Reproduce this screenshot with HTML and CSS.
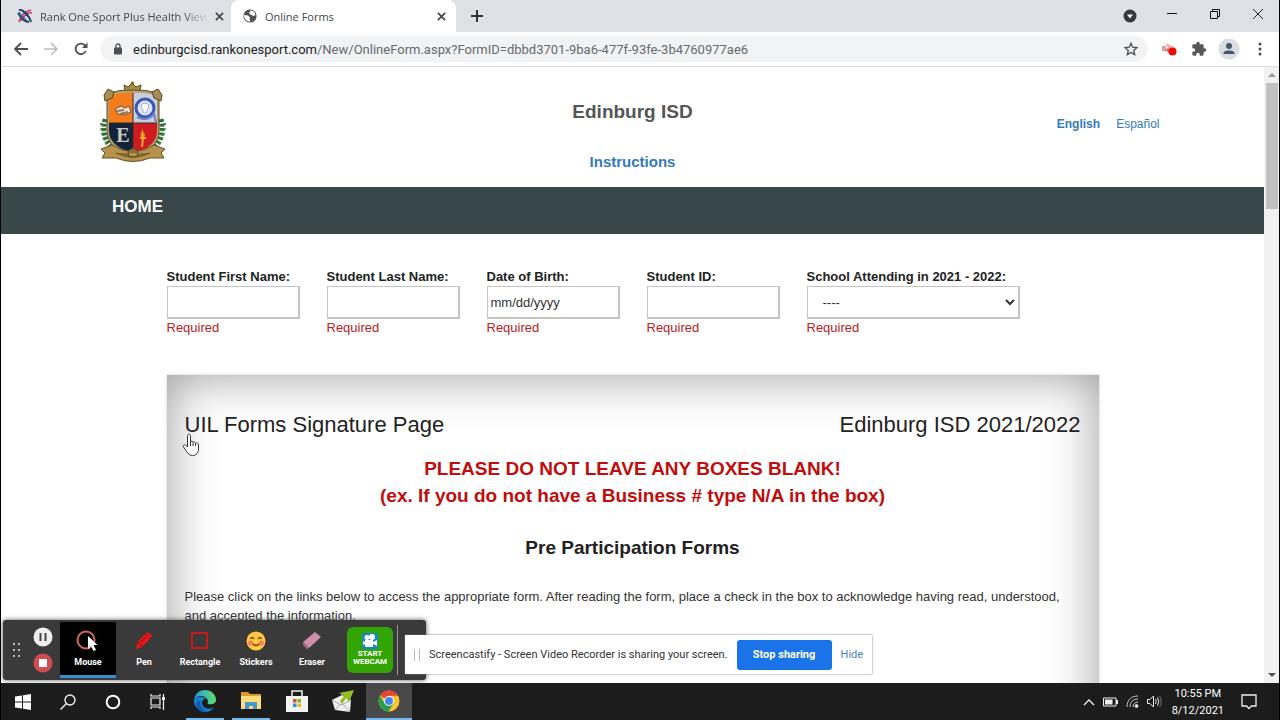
FILE: index.html
```html
<!DOCTYPE html>
<html lang="en">
<head>
    <meta charset="UTF-8">
    <meta name="viewport" content="width=device-width, initial-scale=1.0">
    <title>Online Forms</title>
    <link rel="stylesheet" href="styles.css">
</head>
<body>
    <!-- Tabs -->
    <div class="tab-strip">
        <div class="tab">
            <svg width="16" height="16" viewBox="0 0 16 16" fill="none" stroke-width="2">
                <path d="M14 2C8 3 3 9 2 14M15 5C12 4 8 6 4 13" stroke="#d23c5a" stroke-width="1.500"/>
                <path d="M2 2C7 1 13 9 14 14M1 5C4 10 8 14 12 14" stroke="#24466f"/>
                <path d="M4 2L13 11M2 4L10 13" stroke="#24466f" stroke-width="1"/>
            </svg>
            <span class="tab-title fade">Rank One Sport Plus Health View</span>
            <button class="icon-btn" aria-label="Close tab"><svg width="9" height="9" viewBox="0 0 10 10" stroke="#444" stroke-width="1.800"><path d="M1 1L9 9M9 1L1 9"/></svg></button>
        </div>
        <div class="tab active">
            <svg width="14" height="14" viewBox="0 0 14 14">
                <circle cx="7" cy="7" r="6.600" fill="#505357"/>
                <path d="M1 6L5 6.500L7 8.500L6.500 10L7.500 12.500C4 13 1 10 1 6ZM7.500 1.500L11 2.500L12.500 6L10.500 7L8.500 6L7 5L6 4Z" fill="#fff"/>
            </svg>
            <span class="tab-title">Online Forms</span>
            <button class="icon-btn" aria-label="Close tab"><svg width="9" height="9" viewBox="0 0 10 10" stroke="#444" stroke-width="1.800"><path d="M1 1L9 9M9 1L1 9"/></svg></button>
        </div>
        <button class="icon-btn new-tab" aria-label="New tab"><svg width="12" height="12" viewBox="0 0 12 12" stroke="#333" stroke-width="2"><path d="M6 0V12M0 6H12"/></svg></button>
        <div class="window-controls">
            <button class="icon-btn" aria-label="Search tabs"><svg width="14" height="14" viewBox="0 0 14 14"><circle cx="7" cy="7" r="6.500" fill="#35383c"/><path d="M4 5.500H10L7 9.500Z" fill="#fff"/></svg></button>
            <button class="icon-btn" aria-label="Minimize"><svg width="10" height="10" viewBox="0 0 10 10" stroke="#111"><path d="M0 4.500H10"/></svg></button>
            <button class="icon-btn" aria-label="Restore"><svg width="10" height="10" viewBox="0 0 10 10" stroke="#111" fill="none"><path d="M.5 2.500H7.500V9.500H.5ZM2.500 2.500V.5H9.500V7.500H7.500"/></svg></button>
            <button class="icon-btn" aria-label="Close"><svg width="10" height="10" viewBox="0 0 10 10" stroke="#222"><path d="M0 0L10 10M10 0L0 10"/></svg></button>
        </div>
    </div>

    <!-- Address bar -->
    <div class="toolbar">
        <button class="icon-btn" aria-label="Back"><svg width="14" height="14" viewBox="0 0 14 14" fill="none" stroke="#4a4d51" stroke-width="1.800"><path d="M14 7H1.500M7 1L1 7L7 13"/></svg></button>
        <button class="icon-btn" aria-label="Forward"><svg width="14" height="14" viewBox="0 0 14 14" fill="none" stroke="#b9bbbd" stroke-width="1.500"><path d="M0 7H12.500M7 1L13 7L7 13"/></svg></button>
        <button class="icon-btn" aria-label="Reload"><svg width="14" height="14" viewBox="0 0 14 14" fill="none" stroke="#4a4d51" stroke-width="1.800"><path d="M11.800 9A5.300 5.300 0 1 1 11.300 3.800"/><path d="M13.500 .5V6H8Z" fill="#4a4d51" stroke="none"/></svg></button>
        <div class="address">
            <svg width="10" height="12" viewBox="0 0 10 12"><rect x="1" y="4.500" width="8" height="7" rx="1" fill="#4d5054"/><path d="M3 5V3A2 2 0 0 1 7 3V5" fill="none" stroke="#4d5054" stroke-width="1.300"/></svg>
            <span class="url">edinburgcisd.rankonesport.com<span class="path">/New/OnlineForm.aspx?FormID=dbbd3701-9ba6-477f-93fe-3b4760977ae6</span></span>
            <button class="icon-btn" aria-label="Bookmark"><svg width="14" height="14" viewBox="0 0 14 14" fill="none" stroke="#4a4d51" stroke-width="1.300"><path d="M7 1.200L8.700 5.200L13 5.600L9.700 8.400L10.700 12.600L7 10.400L3.300 12.600L4.300 8.400L1 5.600L5.300 5.200Z"/></svg></button>
        </div>
        <div class="extensions">
            <button class="icon-btn" aria-label="Screencastify"><svg width="16" height="16" viewBox="0 0 16 16"><path d="M1 5H5V10H1Z" fill="#e79a9a"/><path d="M5 2L13 6L11 8L6 6Z" fill="#f0b0b0"/><path d="M4 9L8 12L8 6Z" fill="#d77"/><circle cx="11.500" cy="10.500" r="4" fill="#f00808"/></svg></button>
            <button class="icon-btn" aria-label="Extensions"><svg width="16" height="16" viewBox="0 0 24 24" fill="#55585c"><path d="M20.500 11H19V7c0-1.100-.9-2-2-2h-4V3.500a2.500 2.500 0 0 0-5 0V5H4c-1.100 0-2 .9-2 2v3.800h1.500a2.700 2.700 0 0 1 0 5.400H2V20c0 1.100.9 2 2 2h3.800v-1.500a2.700 2.700 0 0 1 5.400 0V22H17c1.100 0 2-.9 2-2v-4h1.500a2.500 2.500 0 0 0 0-5z"/></svg></button>
            <button class="icon-btn" aria-label="Profile"><svg width="22" height="22" viewBox="0 0 22 22"><circle cx="11" cy="11" r="10.500" fill="#dadde2"/><circle cx="11" cy="8" r="3" fill="#45586b"/><path d="M5.500 16V15C5.500 11.500 16.500 11.500 16.500 15V16Z" fill="#45586b"/></svg></button>
            <button class="icon-btn" aria-label="Menu"><svg width="4" height="14" viewBox="0 0 4 14" fill="#4a4d51"><circle cx="2" cy="2" r="1.500"/><circle cx="2" cy="7" r="1.500"/><circle cx="2" cy="12" r="1.500"/></svg></button>
        </div>
    </div>

    <!-- Page -->
    <div class="viewport">
        <main class="page">
            <header class="page-header">
                <svg class="crest" width="66" height="84" viewBox="0 0 66 84">
                    <g fill="none" stroke="#2f7037" stroke-width="5" stroke-dasharray="3 1.500">
                        <path d="M5 38C2 52 5 64 18 71"/>
                        <path d="M61 38C64 52 61 64 48 71"/>
                    </g>
                    <g fill="none" stroke="#4d8a4c" stroke-width="2" stroke-dasharray="2 3">
                        <path d="M1 42C1 54 4 62 12 69"/>
                        <path d="M65 42C65 54 62 62 54 69"/>
                    </g>
                    <path d="M25 10L24 4L28 6L32 2L36 6L41 4L40 10Z" fill="#a88d3f" stroke="#59491d"/>
                    <circle cx="32.500" cy="2" r="1.500" fill="#6e5a25"/>
                    <path d="M7 13Q20 8 33 9Q46 8 59 13V50C59 62 50 70 33 76C16 70 7 62 7 50Z" fill="#b7a069" stroke="#5b4c2a"/>
                    <path d="M9 15Q21 11 33 12V42H9Z" fill="#f47c1c"/>
                    <path d="M33 12Q46 11 57 15V42H33Z" fill="#c9cde0"/>
                    <path d="M9 42H33V73C18 67 9 61 9 50Z" fill="#13233c"/>
                    <path d="M33 42H57V50C57 61 49 67 33 73Z" fill="#cf1c22"/>
                    <path d="M33 12V73M9 42H57" stroke="#3b2b20"/>
                    <path d="M15 28L21 25L25 27L29 25L31 31L25 34L18 33Z" fill="#f5e3cd" stroke="#7a4b2d"/>
                    <path d="M17 30L24 29M20 33L28 31" stroke="#8e7765" stroke-width="2"/>
                    <circle cx="45" cy="27" r="9" fill="#dfe5fb" stroke="#3858b4" stroke-width="3"/>
                    <path d="M41 26A4 4 0 0 1 49 26L47 29V32H43V29Z" fill="#fff" stroke="#9dabd8"/>
                    <path d="M37 36Q47 41 54 33L56 41" fill="none" stroke="#6b80c6" stroke-width="2"/>
                    <text class="crest-letter" x="23" y="61" text-anchor="middle">E</text>
                    <path d="M42 50Q39 54 42 57L44 57Q46 53 43 51V47Z" fill="#f59a22"/>
                    <path d="M40 57H46M43 57L42 66" stroke="#e9ab36" stroke-width="2"/>
                    <path d="M4 14L8 8L14 11L12 17L5 20ZM62 14L58 8L52 11L54 17L61 20Z" fill="#a58d55" stroke="#594824"/>
                    <path d="M1 68L12 64Q33 77 54 64L65 68L61 72L64 77L50 77Q33 84 16 77L2 77L5 72Z" fill="#b7924c" stroke="#685125"/>
                    <path d="M16 72Q33 80 50 72M28 70L33 67L38 70L37 76L29 76Z" fill="#8c6d36" stroke="#604b24"/>
                </svg>
                <div class="header-title">
                    <h1>Edinburg ISD</h1>
                    <a href="#instructions">Instructions</a>
                </div>
                <div class="languages">
                    <a class="current" href="#english">English</a>
                    <a href="#espanol">Español</a>
                </div>
            </header>
            <nav class="main-nav"><a href="#home">HOME</a></nav>

            <form class="student-form">
                <div class="field">
                    <label for="firstName">Student First Name:</label>
                    <input type="text" id="firstName">
                    <span class="required">Required</span>
                </div>
                <div class="field">
                    <label for="lastName">Student Last Name:</label>
                    <input type="text" id="lastName">
                    <span class="required">Required</span>
                </div>
                <div class="field">
                    <label for="birthDate">Date of Birth:</label>
                    <input type="text" id="birthDate" placeholder="mm/dd/yyyy">
                    <span class="required">Required</span>
                </div>
                <div class="field">
                    <label for="studentId">Student ID:</label>
                    <input type="text" id="studentId">
                    <span class="required">Required</span>
                </div>
                <div class="field wide">
                    <label for="school">School Attending in 2021 - 2022:</label>
                    <select id="school"><option>----</option></select>
                    <span class="required">Required</span>
                </div>
            </form>

            <section class="signature">
                <div class="signature-head">
                    <h2>UIL Forms Signature Page</h2>
                    <h2>Edinburg ISD 2021/2022</h2>
                </div>
                <p class="warning">PLEASE DO NOT LEAVE ANY BOXES BLANK!<br>(ex. If you do not have a Business # type N/A in the box)</p>
                <h3>Pre Participation Forms</h3>
                <p class="intro">Please click on the links below to access the appropriate form. After reading the form, place a check in the box to acknowledge having read, understood, and accepted the information.</p>
            </section>
        </main>
        <div class="scrollbar">
            <button class="icon-btn" aria-label="Scroll up"><svg width="8" height="4" viewBox="0 0 8 4"><path d="M0 4L4 0L8 4Z" fill="#999"/></svg></button>
            <div class="thumb"></div>
            <button class="icon-btn" aria-label="Scroll down"><svg width="8" height="4" viewBox="0 0 8 4"><path d="M0 0L4 4L8 0Z" fill="#505050"/></svg></button>
        </div>

        <svg class="pointer" width="18" height="24" viewBox="0 0 18 24"><path d="M5.500 14V3C5.500 .5 8.500 .5 8.500 3V9C9 7.500 11 8 11 9.500C11.500 8.500 13.500 9 13.500 10.500C14.500 9.500 16.500 10 16.500 12V16C16.500 20 14 22.500 10.500 22.500C7 22.500 5.500 20 4 17.500L1.500 14C.5 12 3 11 4 12.500ZM8.500 9V13M11 10V13M13.500 11V13" fill="#fff" stroke="#333"/></svg>

        <!-- Recorder tools -->
        <div class="recorder">
            <svg class="grip" width="8" height="16" viewBox="0 0 8 16" fill="#bbb"><path d="M0 1H2V3H0ZM5 1H7V3H5ZM0 7H2V9H0ZM5 7H7V9H5ZM0 13H2V15H0ZM5 13H7V15H5Z"/></svg>
            <div class="record-controls">
                <button class="icon-btn" aria-label="Pause"><svg width="20" height="20" viewBox="0 0 20 20"><circle cx="10" cy="10" r="9.500" fill="#eee"/><path d="M7.500 6V14M12.500 6V14" stroke="#444" stroke-width="2"/></svg></button>
                <button class="icon-btn" aria-label="Stop"><svg width="20" height="20" viewBox="0 0 20 20"><circle cx="10" cy="10" r="9.500" fill="#d14c50"/><path d="M6 6H14V14H6Z" fill="#fff"/></svg></button>
            </div>
            <button class="tool selected">
                <svg width="24" height="22" viewBox="0 0 24 22"><circle cx="10" cy="10" r="8.500" fill="none" stroke="#cf6463" stroke-width="2"/><path d="M12 6V19L15 16L17.500 21L20 20L17.500 15H21.500Z" fill="#fff"/></svg>
                Mouse
            </button>
            <button class="tool">
                <svg width="20" height="22" viewBox="0 0 20 22"><path d="M2 19L3.500 12L13.500 2L18.500 6L8.500 16.500Z" fill="#ef1515"/><path d="M11.500 4L16.500 8.500M3.500 12L8.500 16.500M6.500 12.500L12 7" stroke="#6c1212"/></svg>
                Pen
            </button>
            <button class="tool">
                <svg width="20" height="22" viewBox="0 0 20 22"><path d="M2 3H17V18H2Z" fill="none" stroke="#c8161a" stroke-width="2"/></svg>
                Rectangle
            </button>
            <button class="tool">
                <svg width="20" height="22" viewBox="0 0 20 22"><circle cx="10" cy="11" r="9.500" fill="#ffc93c"/><path d="M4.500 9Q6 6 8 9M12 9Q14 6 15.500 9M6 13Q10 18 14 13" fill="none" stroke="#77431b" stroke-width="1.500"/><circle cx="4.500" cy="13" r="2.500" fill="#f2815f"/><circle cx="15.500" cy="13" r="2.500" fill="#f2815f"/></svg>
                Stickers
            </button>
            <button class="tool">
                <svg width="20" height="22" viewBox="0 0 20 22"><path d="M1 12L13 2L19 7L7 18Z" fill="#cf8fa9"/><path d="M1 12L7 18L5 19L1 15Z" fill="#aa6c86"/></svg>
                Eraser
            </button>
            <button class="webcam">
                <svg width="18" height="18" viewBox="0 0 18 18"><rect x="1" y="1" width="16" height="16" rx="2" fill="#1587c8"/><circle cx="6" cy="5.500" r="2.500" fill="#fff"/><circle cx="11" cy="5" r="3" fill="#fff"/><path d="M4 8H12V10L16 8V14L12 12V15H4V12L2 13V9L4 10Z" fill="#fff"/></svg>
                START<br>WEBCAM
            </button>
            <div class="divider"></div>
        </div>

        <div class="share-bar">
            <svg width="6" height="12" viewBox="0 0 6 12" stroke="#bbb"><path d="M.5 0V12M5.500 0V12"/></svg>
            <span>Screencastify - Screen Video Recorder is sharing your screen.</span>
            <button class="stop-sharing">Stop sharing</button>
            <a href="#hide">Hide</a>
        </div>
    </div>

    <!-- Windows taskbar -->
    <footer class="taskbar">
        <div class="system-apps">
            <button class="icon-btn" aria-label="Start"><svg width="16" height="16" viewBox="0 0 16 16" fill="#fff"><path d="M0 2.500L7 1.500V7.500H0ZM8 1.300L16 0V7.500H8ZM0 8.500H7V14.500L0 13.500ZM8 8.500H16V16L8 14.700Z"/></svg></button>
            <button class="icon-btn" aria-label="Search"><svg width="16" height="16" viewBox="0 0 16 16" fill="none" stroke="#eee" stroke-width="1.400"><circle cx="10" cy="6" r="5"/><path d="M6.500 9.500L.5 15.500"/></svg></button>
            <button class="icon-btn" aria-label="Cortana"><svg width="16" height="16" viewBox="0 0 16 16" fill="none" stroke="#fff" stroke-width="2"><circle cx="8" cy="8" r="6.300"/></svg></button>
            <button class="icon-btn" aria-label="Task view"><svg width="16" height="16" viewBox="0 0 16 16" fill="none" stroke="#eee" stroke-width="1.200"><path d="M1 4H10V11H1ZM1 0V2H10V0M1 15V13H10V15M13.500 0V16"/><path d="M12 3H15V6H12Z" fill="#eee" stroke="none"/></svg></button>
        </div>
        <div class="apps">
            <button class="icon-btn running" aria-label="Edge"><svg width="24" height="24" viewBox="0 0 24 24">
                <defs><linearGradient id="edgeTop" x1="0" x2="1"><stop offset="0" stop-color="#1999dd"/><stop offset="1" stop-color="#65dd70"/></linearGradient></defs>
                <path d="M1 11C2 4 7 1 12 1C19 1 23 6 23 11C23 15 18 16 15 15C14 14 16 12 14 10C11 6 4 6 1 11Z" fill="url(#edgeTop)"/>
                <path d="M1 11C4 7 10 7 13 10C9 10 8 14 10 17C12 20 17 21 21 18C18 23 11 25 6 21C2 18 1 15 1 11Z" fill="#1683cf"/>
                <path d="M8 12C6 16 9 21 15 22C10 24 4 21 3 16C3 13 5 11 8 12Z" fill="#0e5aab"/>
            </svg></button>
            <button class="icon-btn running" aria-label="File Explorer"><svg width="22" height="20" viewBox="0 0 22 20"><path d="M1 1H8L10 3H21V18H1Z" fill="#d89d28"/><path d="M1 5H21V18H1Z" fill="#ffdc77"/><path d="M5 18V11H17V18H13V15H9V18Z" fill="#4699ce"/></svg></button>
            <button class="icon-btn" aria-label="Microsoft Store"><svg width="22" height="24" viewBox="0 0 22 24"><path d="M6 7V2H16V7" fill="none" stroke="#eee" stroke-width="1.500"/><path d="M0 7H22V23H0Z" fill="#f3f3f3"/><path d="M7 10H10.500V13.500H7Z" fill="#e64a24"/><path d="M11.500 10H15V13.500H11.500Z" fill="#73b52c"/><path d="M7 14.500H10.500V18H7Z" fill="#2095dc"/><path d="M11.500 14.500H15V18H11.500Z" fill="#f4b51e"/></svg></button>
            <button class="icon-btn" aria-label="Mail"><svg width="24" height="24" viewBox="0 0 24 24"><path d="M1 11L11 6L20 11L19 23L4 21Z" fill="#eee"/><path d="M1 11L10 16L20 11M4 21L9 15M19 23L12 15" fill="none" stroke="#aaa"/><path d="M8 4L23 1L18 13L15 9L11 15L9 12L13 7Z" fill="#91bd25"/></svg></button>
            <button class="icon-btn running focused" aria-label="Chrome"><svg width="22" height="22" viewBox="0 0 22 22"><circle cx="11" cy="11" r="10.500" fill="#f7c52e"/><path d="M11 11L2 5.500A10.500 10.500 0 0 1 20.100 5.700H11Z" fill="#e64435"/><path d="M11 11L6.500 13.500L2 5.500A10.500 10.500 0 0 0 10.500 21.500L15.500 13.500Z" fill="#299c50"/><circle cx="11" cy="11" r="5" fill="#fff"/><circle cx="11" cy="11" r="4" fill="#4385f1"/></svg></button>
        </div>
        <div class="tray">
            <svg width="12" height="8" viewBox="0 0 12 8" fill="none" stroke="#eee" stroke-width="1.300"><path d="M1 7L6 2L11 7"/></svg>
            <svg width="15" height="10" viewBox="0 0 15 10"><path d="M.5 1H13V9H.5Z" fill="none" stroke="#eee"/><path d="M2 2.500H9.500V7.500H2ZM13 3H15V7H13Z" fill="#eee"/></svg>
            <svg width="13" height="13" viewBox="0 0 13 13" fill="none" stroke="#ccc"><path d="M1 12C1 5 5 1 12 1M4 12C4 7 7 4 12 4M7 12C7 9 9 7 12 7"/><circle cx="10.500" cy="11" r="1.500" fill="#fff"/></svg>
            <svg width="15" height="13" viewBox="0 0 15 13" fill="none" stroke="#eee"><path d="M.5 4.500H3L6.500 1V12L3 8.500H.5ZM8.500 4Q10 6.500 8.500 9M10.500 2.500Q13 6.500 10.500 10.500"/><path d="M12.500 1Q16 6.500 12.500 12" stroke="#777"/></svg>
            <div class="clock"><span>10:55 PM</span><span>8/12/2021</span></div>
            <svg width="16" height="16" viewBox="0 0 16 16" fill="none" stroke="#eee" stroke-width="1.300"><path d="M1 1H15V12H10.500L8 14.500L5.500 12H1Z"/></svg>
        </div>
    </footer>
</body>
</html>
```
FILE: styles.css
```css
/* Global Styles */
* {
    box-sizing: border-box;
}

body {
    font-family: "Liberation Sans", Arial, sans-serif;
    margin: 0;
    height: 100vh;
    display: flex;
    flex-direction: column;
    overflow: hidden;
    background-color: #fff;
    color: #222;
    border-left: 1px solid #000;
    border-right: 1px solid #000;
}

a {
    color: #337ab7;
    text-decoration: none;
}

h1, h2, h3, p {
    margin: 0;
}

svg {
    display: block;
    flex-shrink: 0;
}

.icon-btn {
    display: flex;
    align-items: center;
    justify-content: center;
    padding: 0;
    border: none;
    background: none;
}

/* Tabs */
.tab-strip {
    display: flex;
    height: 32px;
    flex-shrink: 0;
    background-color: #dee1e6;
    font-family: "Open Sans", sans-serif;
    font-size: 11px;
    color: #45484c;
}

.tab {
    display: flex;
    align-items: center;
    gap: 8px;
    width: 230px;
    padding: 0 9px 0 16px;
}

.tab.active {
    width: 225px;
    padding-left: 12px;
    padding-right: 10px;
    background-color: #fff;
    border-radius: 8px 8px 0 0;
}

.tab-title {
    flex: 1;
    white-space: nowrap;
}

.tab-title.fade {
    mask-image: linear-gradient(to right, #000 85%, transparent);
}

.tab:first-child {
    padding-right: 13px;
    gap: 7px;
}

.new-tab {
    width: 42px;
}

.window-controls {
    display: flex;
    margin-left: auto;
    padding-bottom: 4px;
}

.window-controls .icon-btn {
    width: 43px;
}

.window-controls .icon-btn:first-child {
    width: 40px;
    padding-top: 4px;
}

/* Address bar */
.toolbar {
    display: flex;
    align-items: center;
    gap: 16px;
    height: 35px;
    flex-shrink: 0;
    padding: 0 17px 0 13px;
    border-bottom: 1px solid #dcdcdc;
}

.address {
    display: flex;
    align-items: center;
    gap: 10px;
    flex: 1;
    height: 26px;
    margin-left: -4px;
    padding: 0 10px 0 13px;
    border-radius: 13px;
    background-color: #f1f3f4;
}

.url {
    flex: 1;
    font-family: Roboto, sans-serif;
    font-size: 13px;
    color: #222;
    white-space: nowrap;
}

.url .path {
    color: #666a6e;
}

.extensions {
    display: flex;
    align-items: center;
    gap: 11px;
    margin-left: -3px;
}

.extensions .icon-btn:first-child {
    margin-right: 3px;
}

.extensions .icon-btn:last-child {
    margin-left: 7px;
}

/* Page */
.viewport {
    position: relative;
    display: flex;
    flex: 1;
    min-height: 0;
}

.page {
    flex: 1;
    overflow: hidden;
}

.page-header {
    display: grid;
    grid-template-columns: 1fr auto 1fr;
    max-width: 1066px;
    height: 120px;
    margin: 0 auto;
    padding-top: 14px;
}

.crest-letter {
    font-family: "Liberation Serif", serif;
    font-size: 20px;
    font-weight: bold;
    fill: #ccc9bc;
}

.header-title {
    display: flex;
    flex-direction: column;
    align-items: center;
    gap: 28px;
    padding-top: 20px;
    font-weight: bold;
    font-size: 15px;
    line-height: 22px;
}

.header-title h1 {
    font-size: 19px;
    color: #555;
}

.languages {
    display: flex;
    justify-content: flex-end;
    gap: 16px;
    padding: 34px 6px 0 0;
    font-size: 12px;
    line-height: 18px;
}

.languages .current {
    font-weight: bold;
}

.main-nav {
    height: 47px;
    padding-left: 111px;
    background-color: #37474a;
    line-height: 40px;
}

.main-nav a {
    color: #fff;
    font-size: 17px;
    font-weight: bold;
}

/* Student fields */
.student-form {
    display: flex;
    gap: 27px;
    max-width: 932px;
    margin: 34px auto 0;
}

.field {
    display: flex;
    flex-direction: column;
    width: 133px;
    font-size: 13px;
}

.field.wide {
    width: 213px;
}

.field label {
    font-weight: bold;
    line-height: 18px;
    white-space: nowrap;
}

.field input,
.field select {
    height: 33px;
    padding: 0 3px;
    border: 1px solid #c4c4c4;
    border-right: 2px solid #c4c4c4;
    border-bottom: 2px solid #c4c4c4;
    border-radius: 0;
    background-color: #fff;
    color: #333;
    font-family: inherit;
    font-size: 13px;
}

.field input::placeholder {
    color: #333;
}

.field select {
    padding-left: 11px;
}

.required {
    color: #b52020;
    line-height: 18px;
}

/* Signature panel */
.signature {
    max-width: 932px;
    height: 600px;
    margin: 38px auto 0;
    padding: 34px 18px;
    box-shadow: inset 0 0 50px #999, 0 0 3px #ccc;
}

.signature-head {
    display: flex;
    justify-content: space-between;
    line-height: 32px;
}

.signature-head h2 {
    font-size: 22px;
    font-weight: normal;
}

.warning {
    margin-top: 14px;
    color: #c00d0d;
    font-size: 19px;
    font-weight: bold;
    line-height: 27px;
    text-align: center;
}

.signature h3 {
    margin-top: 25px;
    font-size: 19px;
    line-height: 28px;
    text-align: center;
}

.intro {
    margin-top: 25px;
    font-size: 13px;
    line-height: 19px;
    color: #333;
}

/* Scrollbar */
.scrollbar {
    display: flex;
    flex-direction: column;
    width: 15px;
    background-color: #f1f1f1;
}

.scrollbar .icon-btn {
    height: 16px;
}

.scrollbar .thumb {
    height: 126px;
    margin: 0 1px auto 2px;
    background-color: #c1c1c1;
}

.pointer {
    position: absolute;
    left: 181px;
    top: 366px;
}

/* Recorder tools */
.recorder {
    position: absolute;
    left: 2px;
    bottom: 3px;
    display: flex;
    align-items: center;
    width: 423px;
    height: 60px;
    padding-left: 10px;
    border-radius: 3px;
    background-color: #3a3a3a;
    box-shadow: 0 0 5px #555;
}

.record-controls {
    display: flex;
    flex-direction: column;
    gap: 6px;
    margin: 0 7px 0 12px;
}

.tool {
    display: flex;
    flex-direction: column;
    align-items: center;
    gap: 5px;
    width: 56px;
    height: 56px;
    padding: 8px 0 0;
    border: none;
    border-bottom: 3px solid transparent;
    background: none;
    color: #fff;
    font-family: Roboto, sans-serif;
    font-size: 9px;
    font-weight: bold;
}

.tool.selected {
    background-color: #000;
    border-bottom-color: #348fd0;
}

.webcam {
    display: flex;
    flex-direction: column;
    align-items: center;
    width: 46px;
    height: 46px;
    margin-left: 7px;
    padding: 5px 0 0;
    border: none;
    border-radius: 6px;
    background-color: #32a404;
    color: #fff;
    font-family: Roboto, sans-serif;
    font-size: 8px;
    font-weight: bold;
    line-height: 8px;
}

.divider {
    width: 1px;
    height: 50px;
    margin-left: 4px;
    background-color: #999;
}

.share-bar {
    position: absolute;
    left: 404px;
    bottom: 9px;
    display: flex;
    align-items: center;
    gap: 9px;
    height: 39px;
    padding: 0 9px;
    background-color: #fff;
    box-shadow: 0 0 2px #777;
    font-family: Roboto, sans-serif;
    font-size: 11px;
    color: #333;
    white-space: nowrap;
}

.stop-sharing {
    width: 95px;
    height: 30px;
    padding: 0;
    border: none;
    border-radius: 3px;
    background-color: #1a73e8;
    color: #fff;
    font-family: inherit;
    font-size: 11px;
    font-weight: bold;
}

.share-bar a {
    color: #4a83c9;
}

/* Windows taskbar */
.taskbar {
    display: flex;
    height: 37px;
    flex-shrink: 0;
    background-color: #1c1c1c;
}

.system-apps,
.apps {
    display: flex;
}

.system-apps {
    margin-left: -1px;
    margin-right: 2px;
}

.system-apps .icon-btn {
    width: 45px;
}

.apps .icon-btn {
    width: 38px;
    margin: 0 4px;
    border-bottom: 2px solid transparent;
}

.apps .running {
    border-bottom-color: #76b9ed;
}

.apps .focused {
    width: 46px;
    margin: 0;
    background-color: #484848;
}

.tray {
    display: flex;
    align-items: center;
    gap: 8px;
    margin-left: auto;
    padding-right: 22px;
}

.clock {
    display: flex;
    flex-direction: column;
    align-items: center;
    margin: 0 9px 0 2px;
    color: #fff;
    font-family: Roboto, sans-serif;
    font-size: 11px;
    line-height: 17px;
}
```
